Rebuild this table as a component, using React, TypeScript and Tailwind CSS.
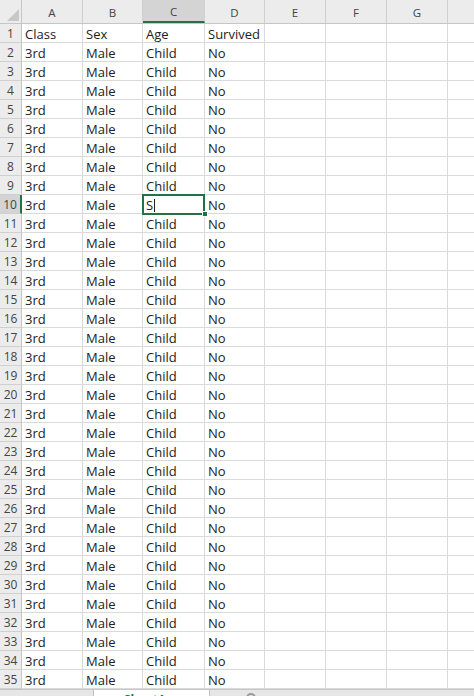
import React from "react";

const cols = ["A", "B", "C", "D", "E", "F", "G", ""];
const widths = ["w-[61px]", "w-[60px]", "w-[62px]", "w-[60px]", "w-[61px]", "w-[61px]", "w-[61px]", "w-[61px]"];

const rows: string[][] = Array.from({ length: 35 }, (_, i) =>
  i === 0 ? ["Class", "Sex", "Age", "Survived"] : ["3rd", "Male", "Child", "No"]
);

function Cell({ text, col, row }: { text?: string; col: number; row: number }) {
  const editing = row === 10 && col === 2;
  return (
    <div
      className={`relative shrink-0 h-[19px] border-r border-b border-[#dadada] flex items-center pl-[3px] pt-[2px] ${widths[col]}`}
    >
      {editing ? (
        <>
          <div className="absolute -left-px -top-px w-[63px] h-[21px] border-2 border-[#217346] z-10" />
          <div className="absolute right-[-4px] bottom-[-4px] w-[6px] h-[6px] bg-[#217346] border border-white z-20" />
          <span className="text-[#222]">S</span>
          <span className="ml-[1px] w-px h-[13px] bg-[#222]" />
        </>
      ) : (
        <span className="text-[#222] whitespace-nowrap">{text}</span>
      )}
    </div>
  );
}

export default function App() {
  return (
    <div
      className="w-[474px] h-[696px] overflow-hidden bg-white text-[13px] leading-none flex flex-col"
      style={{ fontFamily: '"Open Sans", "Noto Sans", sans-serif' }}
    >
      {/* column headers */}
      <div className="flex h-[24px] shrink-0 bg-[#ececec] border-b border-[#c6c6c6]">
        <div className="relative w-[22px] shrink-0 border-r border-[#c6c6c6]">
          <div className="absolute right-[2px] bottom-[2px] w-0 h-0 border-l-[12px] border-l-transparent border-b-[12px] border-b-[#c8c8c8]" />
        </div>
        {cols.map((c, i) => (
          <div
            key={i}
            className={`shrink-0 flex items-center justify-center pt-[2px] text-[11.5px] text-[#444] border-r border-[#d0d0d0] ${widths[i]} ${
              i === 2 ? "bg-[#d4d4d4] border-b-2 border-b-[#217346]" : ""
            }`}
          >
            {c}
          </div>
        ))}
      </div>

      {/* rows */}
      <div className="flex flex-col shrink-0">
        {rows.map((r, ri) => {
          const n = ri + 1;
          return (
            <div key={n} className="flex">
              <div
                className={`w-[22px] h-[19px] shrink-0 flex items-center justify-center pt-[1px] text-[12px] text-[#444] border-b border-[#d0d0d0] ${
                  n === 10 ? "bg-[#d4d4d4] border-r-2 border-r-[#217346]" : "bg-[#ececec] border-r border-r-[#c6c6c6]"
                }`}
              >
                {n}
              </div>
              {cols.map((_, ci) => (
                <Cell key={ci} text={r[ci]} col={ci} row={n} />
              ))}
            </div>
          );
        })}
      </div>

      {/* sheet tab bar */}
      <div className="flex-1 flex bg-[#e6e6e6] border-t border-[#c6c6c6]">
        <div className="w-[94px] shrink-0 border-r border-[#bdbdbd]" />
        <div className="w-[116px] shrink-0 bg-white border-r border-[#bdbdbd] text-[#217346] text-[12px] font-bold pl-[30px] pt-[4px]">
          Sheet1
        </div>
        <div className="w-[36px] shrink-0" />
        <div className="mt-[3px] w-[10px] h-[10px] rounded-full border-2 border-[#9a9a9a]" />
      </div>
    </div>
  );
}
